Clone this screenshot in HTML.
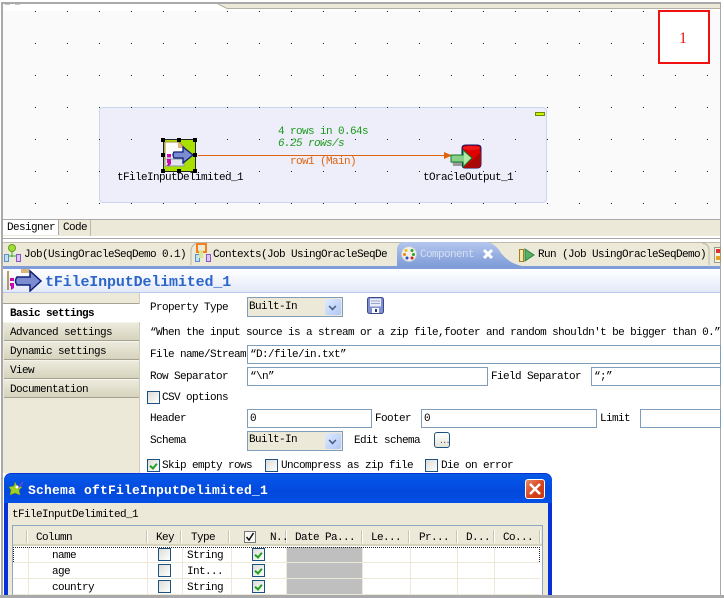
<!DOCTYPE html>
<html><head><meta charset="utf-8"><title>Schema</title>
<style>
html,body{margin:0;padding:0;background:#fff}
#p{position:relative;width:724px;height:598px;overflow:hidden;background:#fff;font:11px/12px "Liberation Mono","Noto Sans CJK SC",monospace;letter-spacing:-.6px;color:#000}
#p div,#p svg,#p span.t{position:absolute}
.t{white-space:pre;height:12px;margin-top:1px}
.inp{background:#fff;border:1px solid #7f9db9;box-sizing:border-box}
.cb{box-sizing:border-box;width:13px;height:13px;border:1px solid #1c5180;background:linear-gradient(135deg,#dcdcd7,#fff)}
.ck:after{content:"";position:absolute;left:3px;top:2px;width:3px;height:5px;border:solid #21a121;border-width:0 2px 2px 0;transform:rotate(40deg)}
.combo{box-sizing:border-box;width:96px;height:20px;background:#ece9d8;border:1px solid #7f9db9}
.combo i{position:absolute;right:1px;top:1px;width:16px;height:16px;background:linear-gradient(135deg,#e1eafe,#aec8f7);border-radius:2px;display:block}
.combo i:after{content:"";position:absolute;left:4px;top:4px;width:5px;height:5px;border:solid #4d6185;border-width:0 2px 2px 0;transform:rotate(45deg) scale(.8)}
.side{left:4px;width:135px;height:19px;box-sizing:border-box;background:linear-gradient(#ecebdc,#d6d3bd);border-bottom:1px solid #a5a294;border-top:1px solid #f6f5ec}
.hs{width:1px;height:13px;top:530px;background:#c9c6b2;border-right:1px solid #fff}
.v{width:1px;top:547px;height:48px;background:#ece9d8}
.h{left:13px;width:527px;height:1px;background:#ece9d8}
.hd{width:4px;height:4px;background:#000}
</style></head><body><div id="p">

<!-- canvas -->
<div style="left:3px;top:9px;width:717px;height:210px;background:#fafafa"></div>
<div style="left:3px;top:4px;width:717px;height:7px;background:#fff"></div>
<svg style="left:0;top:0" width="724" height="12">
<path d="M218 4L227 8.500H720V4z" fill="#ece9d8"/>
<path d="M218 4L227 8.500H720" fill="none" stroke="#b5b3a5"/>
<path d="M5 4.500h5M15 4.500h5" stroke="#c8c8c8"/>
</svg>
<div style="left:99px;top:107px;width:448px;height:96px;box-sizing:border-box;background:#edeef9;border:1px solid #c9d6ee;border-radius:4px"></div>
<svg style="left:0;top:0" width="724" height="220">
<defs><pattern id="g" x="35" y="11" width="32" height="32" patternUnits="userSpaceOnUse"><rect width="1" height="1" fill="#222"/></pattern></defs>
<rect x="35" y="11" width="682" height="205" fill="url(#g)"/>
<line x1="198" y1="155.500" x2="446" y2="155.500" stroke="#e0640f" stroke-width="1"/>
<path d="M444 152v7l8-3.500z" fill="#e0640f"/>
</svg>

<!-- frame -->
<div style="left:1px;top:2px;width:720px;height:2px;background:#a9a9a9"></div>
<div style="left:1px;top:2px;width:2px;height:596px;background:#a9a9a9"></div>
<div style="left:720px;top:2px;width:1px;height:593px;background:#a9a9a9"></div>

<!-- red note -->
<div style="left:658px;top:10px;width:52px;height:54px;box-sizing:border-box;background:#fff;border:2px solid #f01010"></div>
<span class="t" style="left:679px;top:30px;height:16px;font:16px/16px 'Liberation Serif',serif;letter-spacing:0;color:#e81818">1</span>
<div style="left:535px;top:112px;width:10px;height:4px;box-sizing:border-box;background:#c8f400;border:1px solid #6b8a00"></div>

<!-- input component -->
<div style="left:163px;top:139px;width:33px;height:33px;box-sizing:border-box;background:#a9e000;border:1px solid #222"></div>
<svg style="left:163px;top:139px" width="34" height="34" viewBox="0 0 34 34">
<path d="M2 3h14l6 6v11H2z" fill="#fdfdfd" stroke="#b08a3a"/>
<path d="M15 3l7 6h-7z" fill="#dcb67a"/>
<path d="M2 20h19v7H2z" fill="#dfe6ee" stroke="#8c9aa8"/>
<rect x="4" y="15" width="4" height="3.500" fill="#c809b0"/>
<path d="M4 20h4v5l-2 2H4l1-3H4z" fill="#c809b0"/>
<path d="M11 13h9V8l10 8-10 8v-5h-9q-2-3 0-6z" fill="#7b8cd0" stroke="#10207a" stroke-width="1.300"/>
</svg>
<div class="hd" style="left:161px;top:138px"></div><div class="hd" style="left:177px;top:138px"></div><div class="hd" style="left:193px;top:138px"></div>
<div class="hd" style="left:161px;top:153px"></div><div class="hd" style="left:193px;top:153px"></div>
<div class="hd" style="left:161px;top:169px"></div><div class="hd" style="left:177px;top:169px"></div><div class="hd" style="left:193px;top:169px"></div>

<!-- oracle component -->
<svg style="left:450px;top:144px" width="34" height="26" viewBox="0 0 34 26">
<path d="M12 4q0-3 4-3h11q4 0 4 3v16q0 4-4 4H15q-3 0-3-4z" fill="#e00000" stroke="#10106a"/>
<path d="M14 24l17-16v12q0 4-4 4z" fill="#a90808"/>
<ellipse cx="21.500" cy="4" rx="8.500" ry="2" fill="#f01818"/>
<path d="M2 14h10v8H3z" fill="#9a9a9a"/>
<path d="M1 11h12V6l9 8-9 9v-5H1z" fill="#88d088" stroke="#0e7a2a"/>
<path d="M14 8l7 6-7 7z" fill="#b6e8a8"/>
</svg>

<span class="t" style="left:117px;top:171px">tFileInputDelimited_1</span>
<span class="t" style="left:423px;top:171px">tOracleOutput_1</span>
<span class="t" style="left:278px;top:125px;color:#1a9a1a">4 rows in 0.64s</span>
<span class="t" style="left:278px;top:137px;color:#1a9a1a;font-style:italic">6.25 rows/s</span>
<span class="t" style="left:290px;top:155px;color:#e0640f">row1 (Main)</span>

<!-- designer tabs -->
<div style="left:3px;top:219px;width:717px;height:1px;background:#a9a9a9"></div>
<div style="left:3px;top:220px;width:717px;height:16px;background:#ece9d8"></div>
<div style="left:3px;top:220px;width:55px;height:15px;background:#fff;border-right:1px solid #a9a9a9"></div>
<div style="left:90px;top:220px;width:1px;height:16px;background:#bcb9a8"></div>
<span class="t" style="left:7px;top:221px">Designer</span>
<span class="t" style="left:63px;top:221px">Code</span>
<div style="left:3px;top:238px;width:717px;height:1px;background:#a9a9a9"></div>

<!-- view tabs -->
<div style="left:3px;top:239px;width:717px;height:3px;background:#fff"></div>
<div style="left:3px;top:242px;width:717px;height:24px;background:#ece9d8;border-top:1px solid #bdbaa9;box-sizing:border-box"></div>
<svg style="left:3px;top:240px" width="718" height="28" viewBox="0 0 718 28">
<defs><linearGradient id="tb" x1="0" y1="0" x2="0" y2="1"><stop offset="0" stop-color="#b4c6ee"/><stop offset="1" stop-color="#7f9dd8"/></linearGradient></defs>
<path d="M188 25V10q1-6 7-7" fill="none" stroke="#b9b6a4"/>
<path d="M394 26V10q0-8 8-8h80q8 0 14 8q8 13 23 16z" fill="url(#tb)"/>
<path d="M706 25V10q0-6-7-7" fill="none" stroke="#b9b6a4"/>
<!-- job icon -->
<circle cx="9" cy="8" r="3.500" fill="#9ede35" stroke="#6b9a20"/>
<path d="M9 11v6M5 16l11 0" stroke="#33aa33"/>
<rect x="1.500" y="14.500" width="4" height="7" fill="#bfe0f6" stroke="#5a90c8"/>
<rect x="13.500" y="14.500" width="4" height="7" fill="#dcc8f6" stroke="#8a55c8"/>
<!-- contexts icon -->
<rect x="194" y="4" width="9" height="8" fill="none" stroke="#f08020" stroke-width="2"/>
<rect x="192.500" y="14.500" width="4" height="7" fill="#bfe0f6" stroke="#5a90c8"/>
<rect x="203.500" y="14.500" width="4" height="7" fill="#dcc8f6" stroke="#8a55c8"/>
<path d="M196 10h4v8h-4z" fill="#d8e890"/>
<!-- component icon -->
<circle cx="406" cy="14" r="7.500" fill="#f2f0e4" stroke="#c0c8dc"/>
<circle cx="403" cy="10.500" r="1.500" fill="#e8c020"/><circle cx="409" cy="10.500" r="1.500" fill="#30a030"/>
<circle cx="401.500" cy="14.500" r="1.500" fill="#f08020"/><circle cx="410.500" cy="14.500" r="1.500" fill="#30a030"/>
<circle cx="404" cy="18" r="1.500" fill="#2050d0"/><circle cx="409" cy="18" r="1.500" fill="#d02020"/>
<!-- close -->
<path d="M481 10l8 8M489 10l-8 8" stroke="#fff" stroke-width="3"/>
<!-- run icon -->
<rect x="516.500" y="9.500" width="4" height="12" fill="#f4e6b0" stroke="#a08018"/>
<path d="M522 9l9 6-9 6z" fill="#55b060" stroke="#2e8040"/>
<!-- last icon -->
<rect x="711.500" y="7.500" width="6" height="15" fill="#f8f4e0" stroke="#9a9a88"/>
<rect x="713" y="9" width="4" height="4" fill="#e03030"/><rect x="713" y="16" width="4" height="4" fill="#e8a020"/>
</svg>
<span class="t" style="left:24px;top:248px">Job(UsingOracleSeqDemo 0.1)</span>
<span class="t" style="left:213px;top:248px">Contexts(Job UsingOracleSeqDe</span>
<span class="t" style="left:420px;top:248px;color:#d4def4">Component</span>
<span class="t" style="left:538px;top:248px">Run (Job UsingOracleSeqDemo)</span>
<div style="left:3px;top:266px;width:717px;height:3px;background:#7f9dd8"></div>

<!-- title strip -->
<div style="left:3px;top:269px;width:717px;height:23px;background:linear-gradient(#fff,#e3e9f8)"></div>
<div style="left:3px;top:292px;width:717px;height:1px;background:#b9c9ee"></div>
<svg style="left:7px;top:269px" width="36" height="23" viewBox="0 0 36 23">
<path d="M1 2v19" stroke="#a08030" stroke-width="1.500"/>
<path d="M14 0h8v4h-8z" fill="#dcb67a"/>
<rect x="3" y="9" width="4" height="3" fill="#c809b0"/><path d="M3 14h4v5l-3 2v-4H3z" fill="#c809b0"/>
<path d="M10 8h13V2l11 10-11 10v-6H10q-3-4 0-8z" fill="#7b8cd0" stroke="#10207a" stroke-width="1.500"/>
</svg>
<span class="t" style="left:45px;top:273px;height:18px;font:bold 15px/18px 'Liberation Mono',monospace;letter-spacing:-.14px;color:#2c66c8">tFileInputDelimited_1</span>

<!-- sidebar -->
<div style="left:3px;top:293px;width:137px;height:180px;background:#ece9d8;border-right:1px solid #d0cdbc;box-sizing:border-box"></div>
<div style="left:3px;top:293px;width:136px;height:11px;background:#ece9d8;border-bottom:1px solid #a5a294;box-sizing:border-box"></div>
<div style="left:3px;top:304px;width:137px;height:18px;background:#fff"></div>
<span class="t" style="left:10px;top:307px;font-weight:bold">Basic settings</span>
<div class="side" style="top:322px"></div><span class="t" style="left:10px;top:326px">Advanced settings</span>
<div class="side" style="top:341px"></div><span class="t" style="left:10px;top:345px">Dynamic settings</span>
<div class="side" style="top:360px"></div><span class="t" style="left:10px;top:364px">View</span>
<div class="side" style="top:379px"></div><span class="t" style="left:10px;top:383px">Documentation</span>

<!-- form -->
<span class="t" style="left:150px;top:301px">Property Type</span>
<div class="combo" style="left:247px;top:297px"><i></i></div><span class="t" style="left:249px;top:300px">Built-In</span>
<svg style="left:367px;top:297px" width="18" height="18" viewBox="0 0 18 18">
<rect x=".5" y=".5" width="16" height="16" rx="2" fill="#7f8fd0" stroke="#3a4a8a"/>
<rect x="3" y="1.500" width="11" height="8" fill="#e8ecf6"/>
<path d="M4 4h9M4 6.500h9" stroke="#9aa6c8"/>
<rect x="5" y="11" width="7" height="5" fill="#fff"/><rect x="8" y="12" width="2" height="3" fill="#2a3a7a"/>
</svg>
<span class="t" style="left:150px;top:326px">“When the input source is a stream or a zip file,footer and random shouldn't be bigger than 0.”</span>

<span class="t" style="left:150px;top:348px">File name/Stream</span>
<div class="inp" style="left:247px;top:345px;width:474px;height:19px"></div><span class="t" style="left:250px;top:348px">“D:/file/in.txt”</span>
<span class="t" style="left:150px;top:370px">Row Separator</span>
<div class="inp" style="left:247px;top:367px;width:241px;height:19px"></div><span class="t" style="left:250px;top:370px">“\n”</span>
<span class="t" style="left:491px;top:370px">Field Separator</span>
<div class="inp" style="left:591px;top:367px;width:130px;height:19px"></div><span class="t" style="left:594px;top:370px">“;”</span>
<div class="cb" style="left:147px;top:391px"></div><span class="t" style="left:162px;top:391px">CSV options</span>
<span class="t" style="left:150px;top:412px">Header</span>
<div class="inp" style="left:247px;top:409px;width:125px;height:19px"></div><span class="t" style="left:250px;top:412px">0</span>
<span class="t" style="left:375px;top:412px">Footer</span>
<div class="inp" style="left:421px;top:409px;width:176px;height:19px"></div><span class="t" style="left:424px;top:412px">0</span>
<span class="t" style="left:600px;top:412px">Limit</span>
<div class="inp" style="left:640px;top:409px;width:81px;height:19px"></div>
<span class="t" style="left:150px;top:434px">Schema</span>
<div class="combo" style="left:247px;top:431px"><i></i></div><span class="t" style="left:249px;top:433px">Built-In</span>
<span class="t" style="left:354px;top:434px">Edit schema</span>
<div style="left:434px;top:432px;width:16px;height:16px;box-sizing:border-box;border:1px solid #1c5180;border-radius:3px;background:linear-gradient(#fff,#e6e3d6)"></div>
<span class="t" style="left:439px;top:435px;font-size:8px;letter-spacing:-1.500px;color:#444">...</span>
<div class="cb ck" style="left:147px;top:459px"></div><span class="t" style="left:162px;top:459px">Skip empty rows</span>
<div class="cb" style="left:265px;top:459px"></div><span class="t" style="left:281px;top:459px">Uncompress as zip file</span>
<div class="cb" style="left:425px;top:459px"></div><span class="t" style="left:441px;top:459px">Die on error</span>

<!-- dialog -->
<div style="left:4px;top:473px;width:548px;height:125px;background:#0831d9;border-radius:7px 7px 0 0"></div>
<div style="left:4px;top:474px;width:548px;height:29px;background:linear-gradient(#0a5ae0,#0553e8 20%,#0348dc 60%,#0350e6);border-radius:7px 7px 0 0"></div>
<div style="left:8px;top:503px;width:540px;height:92px;background:#ece9d8"></div>
<svg style="left:8px;top:481px" width="16" height="16" viewBox="0 0 16 16">
<path d="M7 1l2 4 5 1-3 3 1 5-5-2-5 2 1-5-2-3 5-1z" fill="#9ed020" stroke="#6a9a10" stroke-width=".5"/>
<path d="M10 7l5-6" stroke="#6a4ac8" stroke-width="1.500"/>
<circle cx="9" cy="6" r="1.500" fill="#fff"/>
</svg>
<span class="t" style="left:28px;top:482px;height:16px;font:bold 13px/16px 'Liberation Mono',monospace;letter-spacing:.2px;color:#fff">Schema oftFileInputDelimited_1</span>
<div style="left:525px;top:479px;width:20px;height:20px;box-sizing:border-box;border:1px solid #fff;border-radius:3px;background:linear-gradient(135deg,#e88a68,#d5421c 55%,#c83a14)"></div>
<svg style="left:525px;top:479px" width="20" height="20"><path d="M5 5l10 10M15 5L5 15" stroke="#fff" stroke-width="2.500"/></svg>
<span class="t" style="left:12px;top:508px">tFileInputDelimited_1</span>

<!-- table -->
<div style="left:12px;top:525px;width:531px;height:70px;background:#fff;border:1px solid #8fa8c0;border-bottom:0;box-sizing:border-box"></div>
<div style="left:13px;top:526px;width:529px;height:20px;background:#ece9d8;border-bottom:2px solid #d6d3bd;box-sizing:border-box"></div>
<div class="hs" style="left:26px"></div><div class="hs" style="left:146px"></div><div class="hs" style="left:180px"></div><div class="hs" style="left:228px"></div><div class="hs" style="left:285px"></div><div class="hs" style="left:361px"></div><div class="hs" style="left:408px"></div><div class="hs" style="left:456px"></div><div class="hs" style="left:493px"></div><div class="hs" style="left:539px"></div>
<span class="t" style="left:36px;top:531px">Column</span>
<span class="t" style="left:156px;top:531px">Key</span>
<span class="t" style="left:191px;top:531px">Type</span>
<div style="left:244px;top:531px;width:12px;height:12px;box-sizing:border-box;border:1px solid #777;background:#fafaf5"></div>
<svg style="left:244px;top:531px" width="12" height="12"><path d="M2.500 6l2.500 3 4.500-7" fill="none" stroke="#111" stroke-width="1.500"/></svg>
<span class="t" style="left:270px;top:531px">N..</span>
<span class="t" style="left:295px;top:531px">Date Pa...</span>
<span class="t" style="left:371px;top:531px">Le...</span>
<span class="t" style="left:419px;top:531px">Pr...</span>
<span class="t" style="left:466px;top:531px">D...</span>
<span class="t" style="left:503px;top:531px">Co...</span>

<div style="left:287px;top:547px;width:75px;height:48px;background:#bfbfbf"></div>
<div class="h" style="top:562px"></div><div class="h" style="top:578px"></div><div class="h" style="top:594px"></div>
<div class="v" style="left:28px"></div><div class="v" style="left:147px"></div><div class="v" style="left:182px"></div><div class="v" style="left:231px"></div><div class="v" style="left:286px"></div><div class="v" style="left:362px"></div><div class="v" style="left:410px"></div><div class="v" style="left:457px"></div><div class="v" style="left:494px"></div>
<div style="left:13px;top:547px;width:527px;height:15px;box-sizing:border-box;border:1px dotted #222;border-bottom:0;border-right-width:1px"></div>

<span class="t" style="left:52px;top:549px">name</span><span class="t" style="left:187px;top:549px">String</span>
<span class="t" style="left:52px;top:565px">age</span><span class="t" style="left:187px;top:565px">Int...</span>
<span class="t" style="left:52px;top:581px">country</span><span class="t" style="left:187px;top:581px">String</span>
<div class="cb" style="left:158px;top:548px"></div><div class="cb" style="left:158px;top:564px"></div><div class="cb" style="left:158px;top:580px"></div>
<div class="cb ck" style="left:252px;top:548px"></div><div class="cb ck" style="left:252px;top:564px"></div><div class="cb ck" style="left:252px;top:580px"></div>

<!-- bottom -->
<div style="left:0;top:595px;width:724px;height:3px;background:#a9a9a9"></div>
</div></body></html>
